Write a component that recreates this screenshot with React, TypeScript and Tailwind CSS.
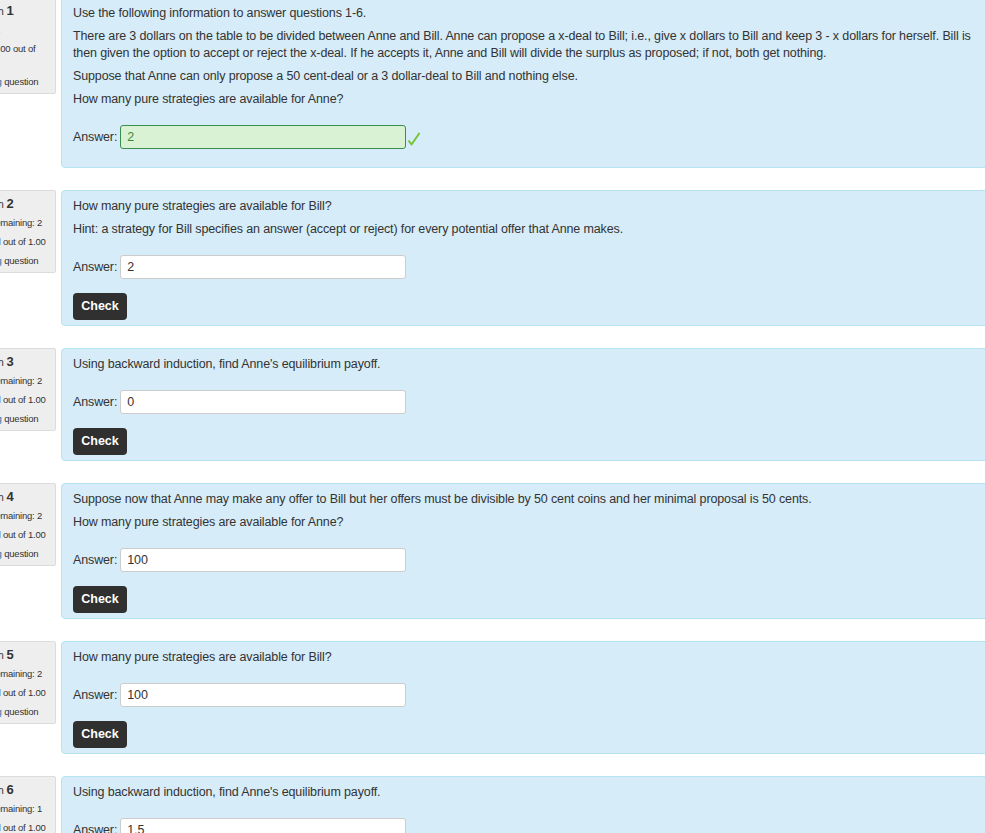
import React from "react";

type Question = {
  no: number;
  state: string[];
  grade: string[];
  text: string[];
  answer: string;
  correct?: boolean;
};

const questions: Question[] = [
  {
    no: 1,
    state: ["Correct"],
    grade: ["Mark 1.00 out of", "1.00"],
    text: [
      "Use the following information to answer questions 1-6.",
      "There are 3 dollars on the table to be divided between Anne and Bill. Anne can propose a x-deal to Bill; i.e., give x dollars to Bill and keep 3 - x dollars for herself. Bill is then given the option to accept or reject the x-deal. If he accepts it, Anne and Bill will divide the surplus as proposed; if not, both get nothing.",
      "Suppose that Anne can only propose a 50 cent-deal or a 3 dollar-deal to Bill and nothing else.",
      "How many pure strategies are available for Anne?",
    ],
    answer: "2",
    correct: true,
  },
  {
    no: 2,
    state: ["Tries remaining: 2"],
    grade: ["Marked out of 1.00"],
    text: [
      "How many pure strategies are available for Bill?",
      "Hint: a strategy for Bill specifies an answer (accept or reject) for every potential offer that Anne makes.",
    ],
    answer: "2",
  },
  {
    no: 3,
    state: ["Tries remaining: 2"],
    grade: ["Marked out of 1.00"],
    text: ["Using backward induction, find Anne's equilibrium payoff."],
    answer: "0",
  },
  {
    no: 4,
    state: ["Tries remaining: 2"],
    grade: ["Marked out of 1.00"],
    text: [
      "Suppose now that Anne may make any offer to Bill but her offers must be divisible by 50 cent coins and her minimal proposal is 50 cents.",
      "How many pure strategies are available for Anne?",
    ],
    answer: "100",
  },
  {
    no: 5,
    state: ["Tries remaining: 2"],
    grade: ["Marked out of 1.00"],
    text: ["How many pure strategies are available for Bill?"],
    answer: "100",
  },
  {
    no: 6,
    state: ["Tries remaining: 1"],
    grade: ["Marked out of 1.00"],
    text: ["Using backward induction, find Anne's equilibrium payoff."],
    answer: "1.5",
  },
];

function Tick() {
  return (
    <svg width="14" height="16" viewBox="0 0 14 16" className="ml-[1px] mt-[4px]" aria-hidden>
      <path d="M1.5 9.5 L4.5 13.5 L12.5 2" fill="none" stroke="#76c435" strokeWidth="2" strokeLinejoin="round" />
    </svg>
  );
}

function FlagIcon() {
  return (
    <svg width="10" height="12" viewBox="0 0 10 12" aria-hidden>
      <path d="M1.5 1v10" stroke="#888" strokeWidth="1.2" />
      <path d="M2 1.5h6l-1.5 2.5 1.5 2.5h-6z" fill="none" stroke="#888" strokeWidth="1" />
    </svg>
  );
}

function Info({ q }: { q: Question }) {
  return (
    <div className="w-[94px] shrink-0 rounded-[2px] border border-[#dcdcdc] bg-[#eeeeee] px-[7px] pb-[4px] pt-[3px]">
      <div className="-ml-[7px] h-[20px] whitespace-nowrap text-[10.4px] leading-[20px] tracking-[-0.1px]">
        Question <span className="text-[13px] font-bold tracking-normal">{q.no}</span>
      </div>
      <div className="mt-[2px] text-[9.5px] leading-[14px] tracking-[-0.2px]">
        {q.state.map((s) => (
          <div key={s} className="whitespace-nowrap">{s}</div>
        ))}
      </div>
      <div className="mt-[5px] text-[9.5px] leading-[14px] tracking-[-0.2px]">
        {q.grade.map((g) => (
          <div key={g} className="whitespace-nowrap">{g}</div>
        ))}
      </div>
      <div className="mt-[5px] flex items-center gap-[4px] whitespace-nowrap text-[9.5px] leading-[14px] tracking-[-0.2px]">
        <FlagIcon />
        <span>
          <span className="text-[#2a6fa8]">Flag</span> question
        </span>
      </div>
    </div>
  );
}

function Formulation({ q }: { q: Question }) {
  return (
    <div
      className={`w-[944px] rounded-[4px] border border-[#b5e4f0] bg-[#d6ecf8] pl-[11px] pt-[7px] ${
        q.correct ? "pb-[18px]" : "pb-[5px]"
      }`}
    >
      {q.text.map((t, i) => (
        <p key={i} className="mb-[6px] max-w-[905px] leading-[17px] last:mb-0">
          {t}
        </p>
      ))}
      <div className="mt-[17px] flex h-[24px] items-center">
        <span>Answer:</span>
        <div
          className={`ml-[3px] flex h-[24px] w-[286px] items-center rounded-[3px] border px-[6px] ${
            q.correct ? "border-[#3b8c4f] bg-[#d9f2d4] text-[#3b8a3b]" : "border-[#cccccc] bg-white text-[#333]"
          }`}
        >
          {q.answer}
        </div>
        {q.correct ? <Tick /> : null}
      </div>
      {q.correct ? null : (
        <button
          type="button"
          className="mt-[14px] h-[27px] w-[54px] rounded-[4px] bg-[#303030] text-[12.5px] font-bold tracking-normal text-white"
        >
          Check
        </button>
      )}
    </div>
  );
}

export default function App() {
  return (
    <div className="h-[833px] w-[985px] overflow-hidden bg-white font-['Liberation_Sans',Arial,sans-serif] text-[12.5px] tracking-[-0.13px] text-[#333]">
      <div className="-ml-[38px] -mt-[3px] flex w-[1100px] flex-col gap-[22px]">
        {questions.map((q) => (
          <div key={q.no} className="flex items-start gap-[5px]">
            <Info q={q} />
            <Formulation q={q} />
          </div>
        ))}
      </div>
    </div>
  );
}
